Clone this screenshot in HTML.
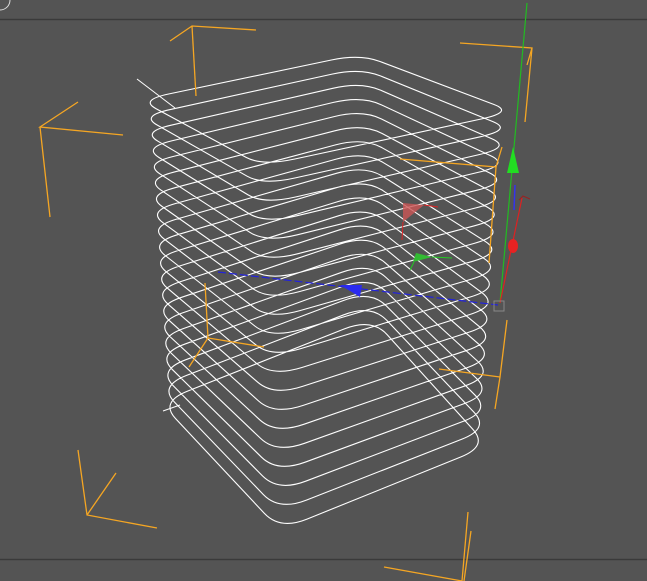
<!DOCTYPE html>
<html><head><meta charset="utf-8"><style>
html,body{margin:0;padding:0;background:#545454;width:647px;height:581px;overflow:hidden}
svg{display:block}
</style></head><body>
<svg id="s" width="647" height="581" viewBox="0 0 647 581" xmlns="http://www.w3.org/2000/svg">
<rect width="647" height="581" fill="#545454"/>
<line x1="0" y1="19.5" x2="647" y2="19.5" stroke="#3a3a3a" stroke-width="1.5"/>
<line x1="0" y1="559.5" x2="647" y2="559.5" stroke="#3a3a3a" stroke-width="1.5"/>
<circle cx="0" cy="0" r="10" fill="none" stroke="#ddd" stroke-width="1"/>
<g id="rings" fill="none" stroke="#fff" stroke-width="1.1"></g>
<line x1="137" y1="79" x2="175" y2="108" stroke="#fff" stroke-width="1"/>
<line x1="163" y1="411" x2="180" y2="405" stroke="#fff" stroke-width="1"/>
<g fill="none" stroke="#f5a623" stroke-width="1.3">
<polyline points="170,41 192,26 256,30"/><line x1="192" y1="26" x2="196" y2="96"/>
<polyline points="78,102 40,127 123,135"/><line x1="40" y1="127" x2="50" y2="217"/>
<polyline points="460,43 532,48 525,122"/><line x1="532" y1="48" x2="527" y2="65"/>
<polyline points="400,159 496,167 489,263"/><line x1="502" y1="147" x2="496" y2="167"/>
<polyline points="205,283 208,338 264,347"/><line x1="208" y1="338" x2="189" y2="367"/>
<polyline points="507,320 500,377 495,409"/><line x1="439" y1="369" x2="500" y2="377"/>
<polyline points="78,450 87,515 157,528"/><line x1="116" y1="473" x2="87" y2="515"/>
<line x1="468" y1="512" x2="462" y2="581"/><line x1="471" y1="531" x2="464" y2="581"/><line x1="384" y1="567" x2="462" y2="581"/>
</g>
<line x1="527" y1="3" x2="500" y2="303" stroke="#22bb22" stroke-width="1.2"/>
<polygon points="513,147 507,173 519,173" fill="#22dd22"/>
<line x1="515" y1="185" x2="514" y2="210" stroke="#3333ee" stroke-width="1.5"/>
<line x1="522" y1="198" x2="500" y2="303" stroke="#dd2222" stroke-width="1.2"/>
<polyline points="519,200 523,196 530,199" fill="none" stroke="#992222"/>
<ellipse cx="513" cy="246" rx="5" ry="7" fill="#e82222"/>
<line x1="218" y1="272" x2="498" y2="305" stroke="#2222dd" stroke-width="1.2" stroke-dasharray="8,3"/>
<polygon points="340,285 362,285 360,297" fill="#2a2aee"/>
<polygon points="403,203 424,205 403,222" fill="#cc5555" opacity="0.8"/>
<line x1="424" y1="205" x2="438" y2="207" stroke="#dd2222"/>
<line x1="403" y1="222" x2="402" y2="240" stroke="#dd2222"/>
<polygon points="416,253 432,257 413,262" fill="#33bb33"/>
<line x1="432" y1="257" x2="452" y2="258" stroke="#22cc22"/>
<line x1="414" y1="262" x2="410" y2="270" stroke="#22cc22"/>
<rect x="494" y="301" width="10" height="10" fill="none" stroke="#888"/>
</svg>
<script>
var g=document.getElementById('rings');
var T={L:[140,100],B:[360,54],R:[514,112],F:[262,166]};
var Bt={L:[160,402],B:[372,318],R:[488,446],F:[280,530]};
function lerp(a,b,t){return [a[0]+(b[0]-a[0])*t,a[1]+(b[1]-a[1])*t];}
var N=20,r=0.13,d='';
for(var i=0;i<N;i++){
 var t=i/(N-1);
 var P=['L','B','R','F'].map(function(k){return lerp(T[k],Bt[k],t);});
 var s='';
 for(var j=0;j<4;j++){
  var c=P[j],p=P[(j+3)%4],n=P[(j+1)%4];
  var a=lerp(c,p,r),b=lerp(c,n,r);
  s+=(j==0?'M':'L')+a[0].toFixed(1)+','+a[1].toFixed(1)+' Q'+c[0].toFixed(1)+','+c[1].toFixed(1)+' '+b[0].toFixed(1)+','+b[1].toFixed(1)+' ';
 }
 d+=s+'Z ';
}
var p=document.createElementNS('http://www.w3.org/2000/svg','path');
p.setAttribute('d',d);g.appendChild(p);
</script>
</body></html>
